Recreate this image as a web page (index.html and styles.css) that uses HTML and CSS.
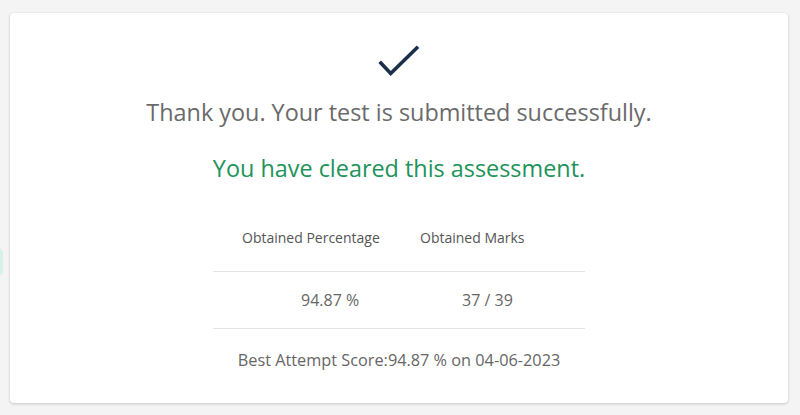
FILE: index.html
```html
<!DOCTYPE html>
<html lang="en">
<head>
<meta charset="utf-8">
<title>Test submitted</title>
<link rel="stylesheet" href="styles.css">
</head>
<body>
<div class="side-tab"></div>
<main class="card">
  <svg class="check" width="48" height="36" viewBox="0 0 48 36" aria-hidden="true">
    <polyline points="4.7,19.7 15.7,31.5 43,4.7" fill="none" stroke="#1b2e4a" stroke-width="3.6" stroke-linecap="butt" stroke-linejoin="miter"/>
  </svg>
  <p class="thanks">Thank you. Your test is submitted successfully.</p>
  <p class="cleared">You have cleared this assessment.</p>
  <div class="results">
    <div class="row head">
      <div class="cell c1">Obtained Percentage</div>
      <div class="cell c2">Obtained Marks</div>
    </div>
    <div class="row vals">
      <div class="cell v1">94.87 %</div>
      <div class="cell v2">37 / 39</div>
    </div>
  </div>
  <p class="best">Best Attempt Score:94.87 % on 04-06-2023</p>
</main>
</body>
</html>
```
FILE: styles.css
```css
html, body {
  margin: 0;
  padding: 0;
}
body {
  background: #f4f4f4;
  font-family: "Open Sans", "Noto Sans", sans-serif;
  padding: 13px 12px 12px 10px;
  height: 415px;
  box-sizing: border-box;
  position: relative;
  overflow: hidden;
}
.side-tab {
  position: absolute;
  left: -8px;
  top: 248px;
  width: 11px;
  height: 28px;
  border-radius: 6px;
  background: #d5f1e8;
}
.card {
  background: #fff;
  border-radius: 4px;
  box-shadow: 0 1px 3px rgba(0,0,0,0.18), 0 0 1px rgba(0,0,0,0.08);
  height: 390px;
  box-sizing: border-box;
  padding-top: 29px;
  display: flex;
  flex-direction: column;
  align-items: center;
}
.check {
  display: block;
}
.thanks {
  margin: 19px 0 0;
  font-size: 23.4px;
  line-height: 30px;
  color: #6a6a6a;
}
.cleared {
  margin: 26px 0 0;
  font-size: 23.4px;
  line-height: 30px;
  color: #21935a;
}
.results {
  margin-top: 45px;
  width: 372px;
}
.row {
  display: flex;
  border-bottom: 1px solid #e3e3e3;
}
.cell {
  line-height: 20px;
  flex: none;
}
.head .cell {
  font-size: 14px;
  font-weight: 500;
  color: #555;
  padding-bottom: 23px;
}
.c1 { padding-left: 29px; width: 178px; }
.c2 { padding-left: 0; }
.vals .cell {
  font-size: 16px;
  color: #666;
  padding-top: 18px;
  padding-bottom: 18px;
}
.v1 { padding-left: 88px; width: 161px; }
.v2 { padding-left: 0; }
.best {
  margin: 21px 0 0;
  font-size: 16.3px;
  line-height: 20px;
  color: #666;
}
```
